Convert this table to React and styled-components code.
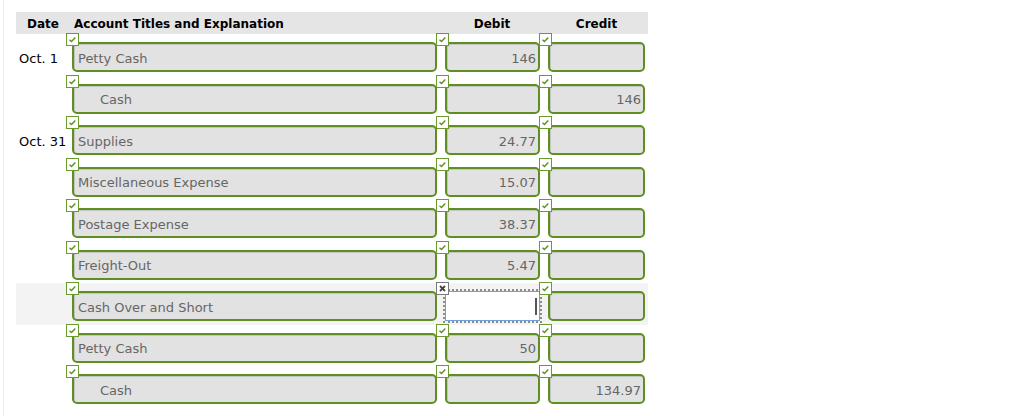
import React from 'react';
import styled, { createGlobalStyle } from 'styled-components';

const GlobalStyle = createGlobalStyle`
  body {
    margin: 0;
    background: #fff;
    font-family: "DejaVu Sans", Verdana, sans-serif;
  }
`;

const columns = '50px 370px 103px 109px';

const Page = styled.div`
  height: 416px;
  margin-left: 3px;
  border-left: 1px solid #eaeef4;
  padding: 12px 0 0 12px;
  box-sizing: border-box;
`;

const Table = styled.div`
  width: 632px;
`;

const HeaderRow = styled.div`
  display: grid;
  grid-template-columns: ${columns};
  height: 22px;
  box-sizing: border-box;
  padding-top: 2px;
  align-items: center;
  background: #e5e5e5;
  font-size: 12px;
  font-weight: bold;
  color: #000;
`;

const HeadCell = styled.div`
  text-align: ${p => p.$align || 'left'};
  padding: ${p => p.$pad || '0'};
`;

const Row = styled.div`
  display: grid;
  grid-template-columns: ${columns};
  height: 41.5px;
  background: ${p => (p.$active ? '#f3f3f3' : 'transparent')};
`;

const DateCell = styled.div`
  padding: 17px 0 0 3px;
  font-size: 13px;
  line-height: 16px;
  color: #000;
  white-space: nowrap;
`;

const FieldCell = styled.div`
  position: relative;
  padding: 8px 0 0 ${p => p.$offset}px;
`;

const Mark = styled.span`
  position: absolute;
  left: 0;
  top: -1px;
  z-index: 1;
  width: 13px;
  height: 13px;
  box-sizing: border-box;
  border: 1px solid ${p => (p.$wrong ? '#7a7a7a' : '#6b9a2e')};
  background: #fff;
  display: flex;
  align-items: center;
  justify-content: center;
`;

const Field = styled.input`
  display: block;
  width: ${p => p.$width}px;
  height: 30px;
  box-sizing: border-box;
  margin: 0;
  border: 2px solid #5f8f22;
  border-radius: 5px;
  background: #e2e2e2;
  box-shadow: inset 1px 1px 0 #c4c4c4;
  font-family: "DejaVu Sans", Verdana, sans-serif;
  font-size: 13px;
  color: #666;
  text-align: ${p => (p.$right ? 'right' : 'left')};
  padding: 2px 2px 0 ${p => (p.$indent ? 26 : 4)}px;
  outline: none;
`;

const FocusField = styled.div`
  width: ${p => p.$width}px;
  height: 30px;
  box-sizing: border-box;
  border: 1px solid #6fa0dd;
  background: #fff;
  outline: 2px dotted #8c8c8c;
  outline-offset: 0;
  display: flex;
  align-items: center;
  justify-content: flex-end;
  padding-right: 2px;
`;

const Caret = styled.span`
  width: 2px;
  height: 17px;
  background: #555;
`;

const Check = () => (
  <svg width="11" height="11" viewBox="0 0 11 11">
    <path d="M2.5 5.8 L4.5 7.6 L8.3 3.6" fill="none" stroke="#5f8f22" strokeWidth="1.4" />
  </svg>
);

const Cross = () => (
  <svg width="11" height="11" viewBox="0 0 11 11">
    <path d="M3 3 L8 8 M8 3 L3 8" fill="none" stroke="#444" strokeWidth="1.8" />
  </svg>
);

const rows = [
  { date: 'Oct. 1', title: 'Petty Cash', debit: '146', credit: '' },
  { date: '', title: 'Cash', indent: true, debit: '', credit: '146' },
  { date: 'Oct. 31', title: 'Supplies', debit: '24.77', credit: '' },
  { date: '', title: 'Miscellaneous Expense', debit: '15.07', credit: '' },
  { date: '', title: 'Postage Expense', debit: '38.37', credit: '' },
  { date: '', title: 'Freight-Out', debit: '5.47', credit: '' },
  { date: '', title: 'Cash Over and Short', debit: null, credit: '', active: true },
  { date: '', title: 'Petty Cash', debit: '50', credit: '' },
  { date: '', title: 'Cash', indent: true, debit: '', credit: '134.97' },
];

const App = () => (
  <>
    <GlobalStyle />
    <Page>
      <Table>
        <HeaderRow>
          <HeadCell $align="center" $pad="0 0 0 4px">Date</HeadCell>
          <HeadCell $pad="0 0 0 8px">Account Titles and Explanation</HeadCell>
          <HeadCell $align="center" $pad="0 0 0 9px">Debit</HeadCell>
          <HeadCell $align="center" $pad="0 3px 0 9px">Credit</HeadCell>
        </HeaderRow>
        {rows.map((r, i) => (
          <Row key={i} $active={r.active}>
            <DateCell>{r.date}</DateCell>
            <FieldCell $offset={6}>
              <Mark><Check /></Mark>
              <Field readOnly value={r.title} $width={365} $indent={r.indent} />
            </FieldCell>
            <FieldCell $offset={9}>
              {r.debit === null ? (
                <>
                  <Mark $wrong><Cross /></Mark>
                  <FocusField $width={95}><Caret /></FocusField>
                </>
              ) : (
                <>
                  <Mark><Check /></Mark>
                  <Field readOnly value={r.debit} $width={95} $right />
                </>
              )}
            </FieldCell>
            <FieldCell $offset={9}>
              <Mark><Check /></Mark>
              <Field readOnly value={r.credit} $width={97} $right />
            </FieldCell>
          </Row>
        ))}
      </Table>
    </Page>
  </>
);

export default App;
